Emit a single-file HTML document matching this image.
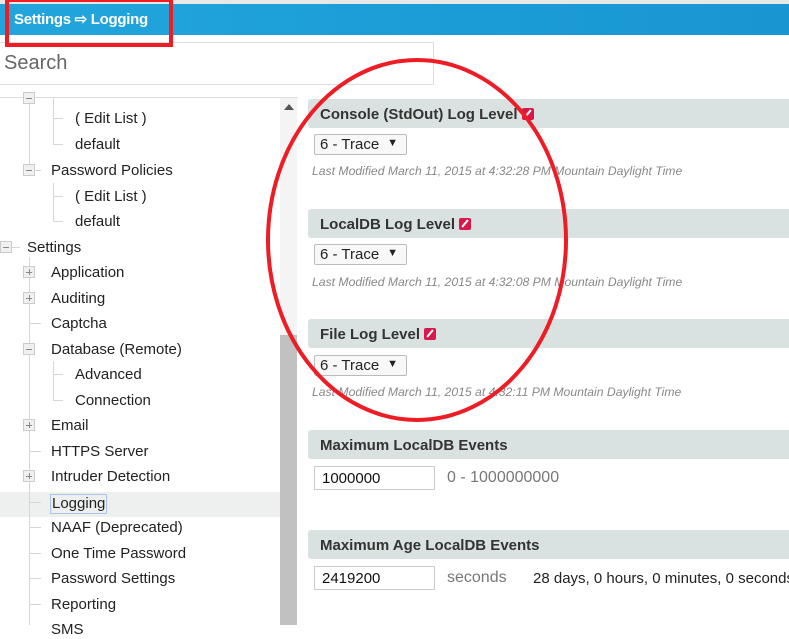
<!DOCTYPE html>
<html><head><meta charset="utf-8"><style>
*{margin:0;padding:0;box-sizing:border-box}
body{width:789px;height:625px;overflow:hidden;background:#fff;font-family:"Liberation Sans",Arial,sans-serif;position:relative}
.a{position:absolute}
.t{position:absolute;font-size:15px;line-height:18px;color:#222;white-space:nowrap}
.box{position:absolute;width:12px;height:12px;border:1px solid #ccc;background:#f0f0f0}
.box:after{content:"";position:absolute;left:2px;top:5px;width:6px;height:1px;background:#888}
.plus:before{content:"";position:absolute;left:5px;top:2px;width:1px;height:6px;background:#888}
.vl{position:absolute;width:1px;background:#d6d6d6}
.hl{position:absolute;height:1px;background:#d6d6d6}
.hdr{position:absolute;left:308px;width:490px;height:29px;background:#dae2e1;border-radius:3px;font-weight:bold;font-size:15px;color:#333;padding:7px 0 0 12px}
.ed{display:inline-block;width:12px;height:12px;background:#d8174a;border-radius:2px;vertical-align:-1px;margin-left:4px;position:relative}
.ed:after{content:"";position:absolute;left:5px;top:1px;width:2px;height:9px;background:#fff;transform:rotate(40deg)}
.sel{position:absolute;left:314px;width:93px;height:21px;border:1px solid #bbb;border-radius:2px;background:#f8f8f8;font-size:15px;padding:1px 0 0 5px;color:#222}
.sel span{position:absolute;right:8px;top:2px;font-size:11px}
.lm{position:absolute;left:312px;font-size:12.2px;font-style:italic;color:#888}
.inp{position:absolute;left:314px;width:121px;height:24px;border:1px solid #ccc;font-size:15px;padding:3px 0 0 7px;color:#111}
</style></head><body>
<div class="a" style="left:0;top:0;width:789px;height:4px;background:#e8e8e8"></div>
<div class="a" style="left:0;top:4px;width:789px;height:31px;background:linear-gradient(90deg,#22a5dc,#1896d2)"></div>
<div class="a" style="left:14px;top:10px;color:#fff;font-weight:bold;font-size:15px;letter-spacing:-0.3px;font-family:'Liberation Sans Narrow','Liberation Sans',sans-serif">Settings ⇨ Logging</div>
<div class="a" style="left:0;top:42px;width:434px;height:43px;border:1px solid #ddd;border-left:none"></div>
<div class="a" style="left:4px;top:52px;font-size:20px;color:#666">Search</div>
<div class="a" style="left:0;top:97px;width:298px;height:1px;background:#ddd"></div>
<div class="a" style="left:280px;top:98px;width:17px;height:527px;background:#f4f4f4"></div>
<div class="a" style="left:280px;top:335px;width:17px;height:290px;background:#c1c1c1"></div>
<div class="a" style="left:284px;top:104px;width:0;height:0;border-left:5px solid transparent;border-right:5px solid transparent;border-bottom:6px solid #555"></div>
<div class="a" style="left:0;top:492px;width:280px;height:25px;background:#eef0f0"></div>
<div class="vl" style="left:29px;top:98px;height:72px"></div>
<div class="box" style="left:23px;top:92px"></div>
<div class="vl" style="left:53px;top:98px;height:46px"></div>
<div class="hl" style="left:53px;top:118px;width:10px"></div>
<div class="hl" style="left:53px;top:144px;width:10px"></div>
<div class="box" style="left:23px;top:164px"></div>
<div class="hl" style="left:35px;top:170px;width:6px"></div>
<div class="vl" style="left:53px;top:183px;height:38px"></div>
<div class="hl" style="left:53px;top:196px;width:10px"></div>
<div class="hl" style="left:53px;top:221px;width:10px"></div>
<div class="box" style="left:0;top:241px"></div>
<div class="hl" style="left:12px;top:247px;width:8px"></div>
<div class="vl" style="left:29px;top:257px;height:368px"></div>
<div class="box plus" style="left:23px;top:266px"></div>
<div class="box plus" style="left:23px;top:292px"></div>
<div class="hl" style="left:29px;top:323px;width:12px"></div>
<div class="box" style="left:23px;top:343px"></div>
<div class="vl" style="left:53px;top:361px;height:39px"></div>
<div class="hl" style="left:53px;top:374px;width:10px"></div>
<div class="hl" style="left:53px;top:400px;width:10px"></div>
<div class="box plus" style="left:23px;top:419px"></div>
<div class="hl" style="left:29px;top:451px;width:12px"></div>
<div class="box plus" style="left:23px;top:470px"></div>
<div class="hl" style="left:29px;top:502px;width:12px"></div>
<div class="hl" style="left:29px;top:527px;width:12px"></div>
<div class="hl" style="left:29px;top:553px;width:12px"></div>
<div class="hl" style="left:29px;top:578px;width:12px"></div>
<div class="hl" style="left:29px;top:604px;width:12px"></div>
<div class="t" style="left:75px;top:110px">( Edit List )</div>
<div class="t" style="left:75px;top:136px">default</div>
<div class="t" style="left:51px;top:162px">Password Policies</div>
<div class="t" style="left:75px;top:188px">( Edit List )</div>
<div class="t" style="left:75px;top:213px">default</div>
<div class="t" style="left:27px;top:239px">Settings</div>
<div class="t" style="left:51px;top:264px">Application</div>
<div class="t" style="left:51px;top:290px">Auditing</div>
<div class="t" style="left:51px;top:315px">Captcha</div>
<div class="t" style="left:51px;top:341px">Database (Remote)</div>
<div class="t" style="left:75px;top:366px">Advanced</div>
<div class="t" style="left:75px;top:392px">Connection</div>
<div class="t" style="left:51px;top:417px">Email</div>
<div class="t" style="left:51px;top:443px">HTTPS Server</div>
<div class="t" style="left:51px;top:468px">Intruder Detection</div>
<div class="t" style="left:50px;top:494px;border:1px solid #a8c4ec;padding:0 1px">Logging</div>
<div class="t" style="left:51px;top:519px">NAAF (Deprecated)</div>
<div class="t" style="left:51px;top:545px">One Time Password</div>
<div class="t" style="left:51px;top:570px">Password Settings</div>
<div class="t" style="left:51px;top:596px">Reporting</div>
<div class="t" style="left:51px;top:621px">SMS</div>
<div class="hdr" style="top:99px">Console (StdOut) Log Level<span class="ed"></span></div>
<div class="sel" style="top:134px">6 - Trace<span>▼</span></div>
<div class="lm" style="top:164px">Last Modified March 11, 2015 at 4:32:28 PM Mountain Daylight Time</div>
<div class="hdr" style="top:209px">LocalDB Log Level<span class="ed"></span></div>
<div class="sel" style="top:244px">6 - Trace<span>▼</span></div>
<div class="lm" style="top:275px">Last Modified March 11, 2015 at 4:32:08 PM Mountain Daylight Time</div>
<div class="hdr" style="top:319px">File Log Level<span class="ed"></span></div>
<div class="sel" style="top:355px">6 - Trace<span>▼</span></div>
<div class="lm" style="top:385px">Last Modified March 11, 2015 at 4:32:11 PM Mountain Daylight Time</div>
<div class="hdr" style="top:430px">Maximum LocalDB Events</div>
<div class="inp" style="top:466px">1000000</div>
<div class="a" style="left:447px;top:469px;font-size:16px;color:#777">0 - 1000000000</div>
<div class="hdr" style="top:530px">Maximum Age LocalDB Events</div>
<div class="inp" style="top:566px">2419200</div>
<div class="a" style="left:447px;top:569px;font-size:16px;color:#777">seconds</div>
<div class="a" style="left:533px;top:570px;font-size:15px;color:#222;white-space:nowrap">28 days, 0 hours, 0 minutes, 0 seconds</div>
<div class="a" style="left:5px;top:-2px;width:168px;height:49px;border:4px solid #ee1c25"></div>
<svg class="a" style="left:0;top:0" width="789" height="625"><ellipse cx="417" cy="240" rx="149" ry="180" fill="none" stroke="#ee1c25" stroke-width="4"/></svg>
</body></html>
